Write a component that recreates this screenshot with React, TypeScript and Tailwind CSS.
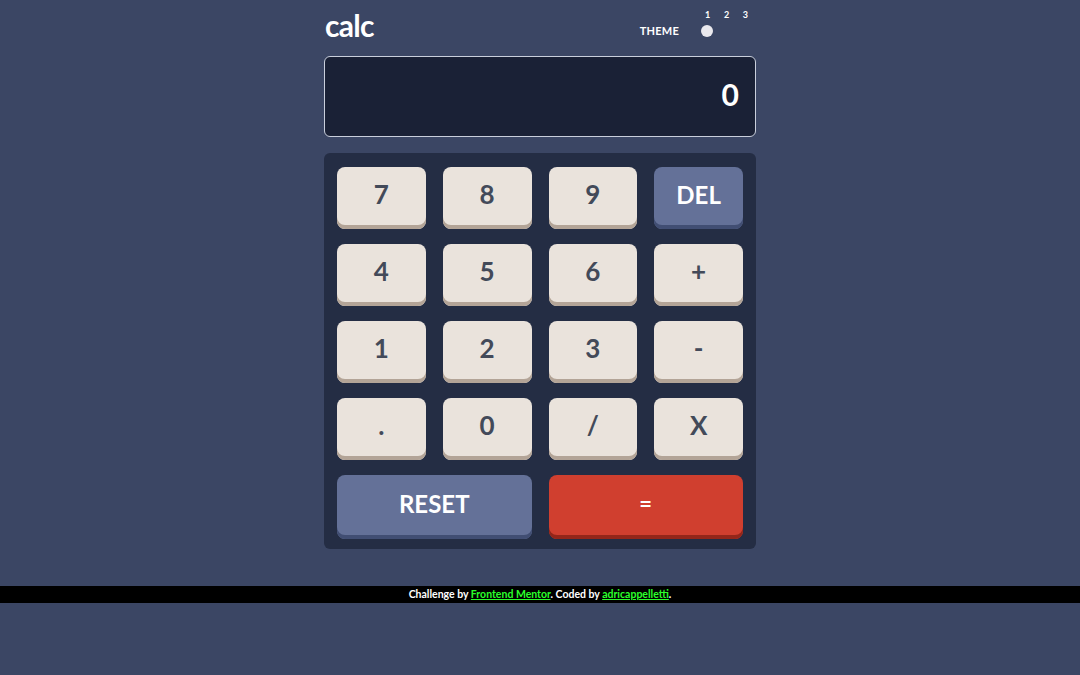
type Key = {
  label: string;
  kind?: "num" | "fn" | "eq";
  wide?: boolean;
};

const keys: Key[] = [
  { label: "7" }, { label: "8" }, { label: "9" }, { label: "DEL", kind: "fn" },
  { label: "4" }, { label: "5" }, { label: "6" }, { label: "+" },
  { label: "1" }, { label: "2" }, { label: "3" }, { label: "-" },
  { label: "." }, { label: "0" }, { label: "/" }, { label: "X" },
  { label: "RESET", kind: "fn", wide: true }, { label: "=", kind: "eq", wide: true },
];

function CalcKey({ k }: { k: Key }) {
  const base = "flex items-center justify-center rounded-[8px] pb-[7px] font-bold";
  if (k.kind === "fn") {
    return (
      <button
        className={`${base} ${k.wide ? "col-span-2 h-[64px]" : "h-[62px]"} bg-[#647198] text-white text-[24px] shadow-[inset_0_-4px_0_#414e73]`}
      >
        {k.label}
      </button>
    );
  }
  if (k.kind === "eq") {
    return (
      <button className={`${base} col-span-2 h-[64px] bg-[#d03f2f] text-white text-[22px] shadow-[inset_0_-4px_0_#93261a]`}>
        {k.label}
      </button>
    );
  }
  return (
    <button className={`${base} h-[62px] bg-[#eae3dc] text-[#434a59] text-[26px] shadow-[inset_0_-4px_0_#b3a497]`}>
      {k.label}
    </button>
  );
}

export default function App() {
  return (
    <div
      className="min-h-screen bg-[#3b4664] flex flex-col items-center"
      style={{ fontFamily: "Lato, 'Open Sans', sans-serif" }}
    >
      <div className="w-[432px] pt-[10px]">
        {/* header */}
        <div className="flex items-start justify-between h-[46px]">
          <h1 className="text-white text-[30px] font-bold leading-[30px] pl-[1px] tracking-tight">calc</h1>

          <div className="flex items-end gap-[22px] pr-[7px]">
            <span className="text-white text-[11px] font-bold tracking-[0.02em] leading-none mb-[1px]">THEME</span>
            <div className="flex flex-col w-[48px]">
              <div className="flex justify-between text-white text-[9px] font-bold leading-none pl-[4px] pr-[1px]">
                <span>1</span>
                <span>2</span>
                <span>3</span>
              </div>
              <div className="mt-[6px] h-[12px] rounded-full">
                <div className="w-[12px] h-[12px] rounded-full bg-[#eae9ee]" />
              </div>
            </div>
          </div>
        </div>

        {/* display */}
        <div className="h-[81px] rounded-[6px] border border-[#c9cfdc] bg-[#1a2136] flex items-center justify-end pr-[16px] pb-[5px]">
          <span className="text-white text-[30px] font-bold">0</span>
        </div>

        {/* keypad */}
        <div className="mt-[16px] rounded-[6px] bg-[#242d44] px-[13px] pt-[14px] pb-[10px] grid grid-cols-4 gap-x-[17px] gap-y-[15px]">
          {keys.map((k) => (
            <CalcKey key={k.label} k={k} />
          ))}
        </div>
      </div>

      <footer className="mt-[37px] w-full h-[17px] bg-black flex items-center justify-center text-white text-[10.5px] font-bold">
        <span>
          Challenge by{" "}
          <a href="#" className="text-[#2bff2b] underline">Frontend Mentor</a>. Coded by{" "}
          <a href="#" className="text-[#2bff2b] underline">adricappelletti</a>.
        </span>
      </footer>
    </div>
  );
}
